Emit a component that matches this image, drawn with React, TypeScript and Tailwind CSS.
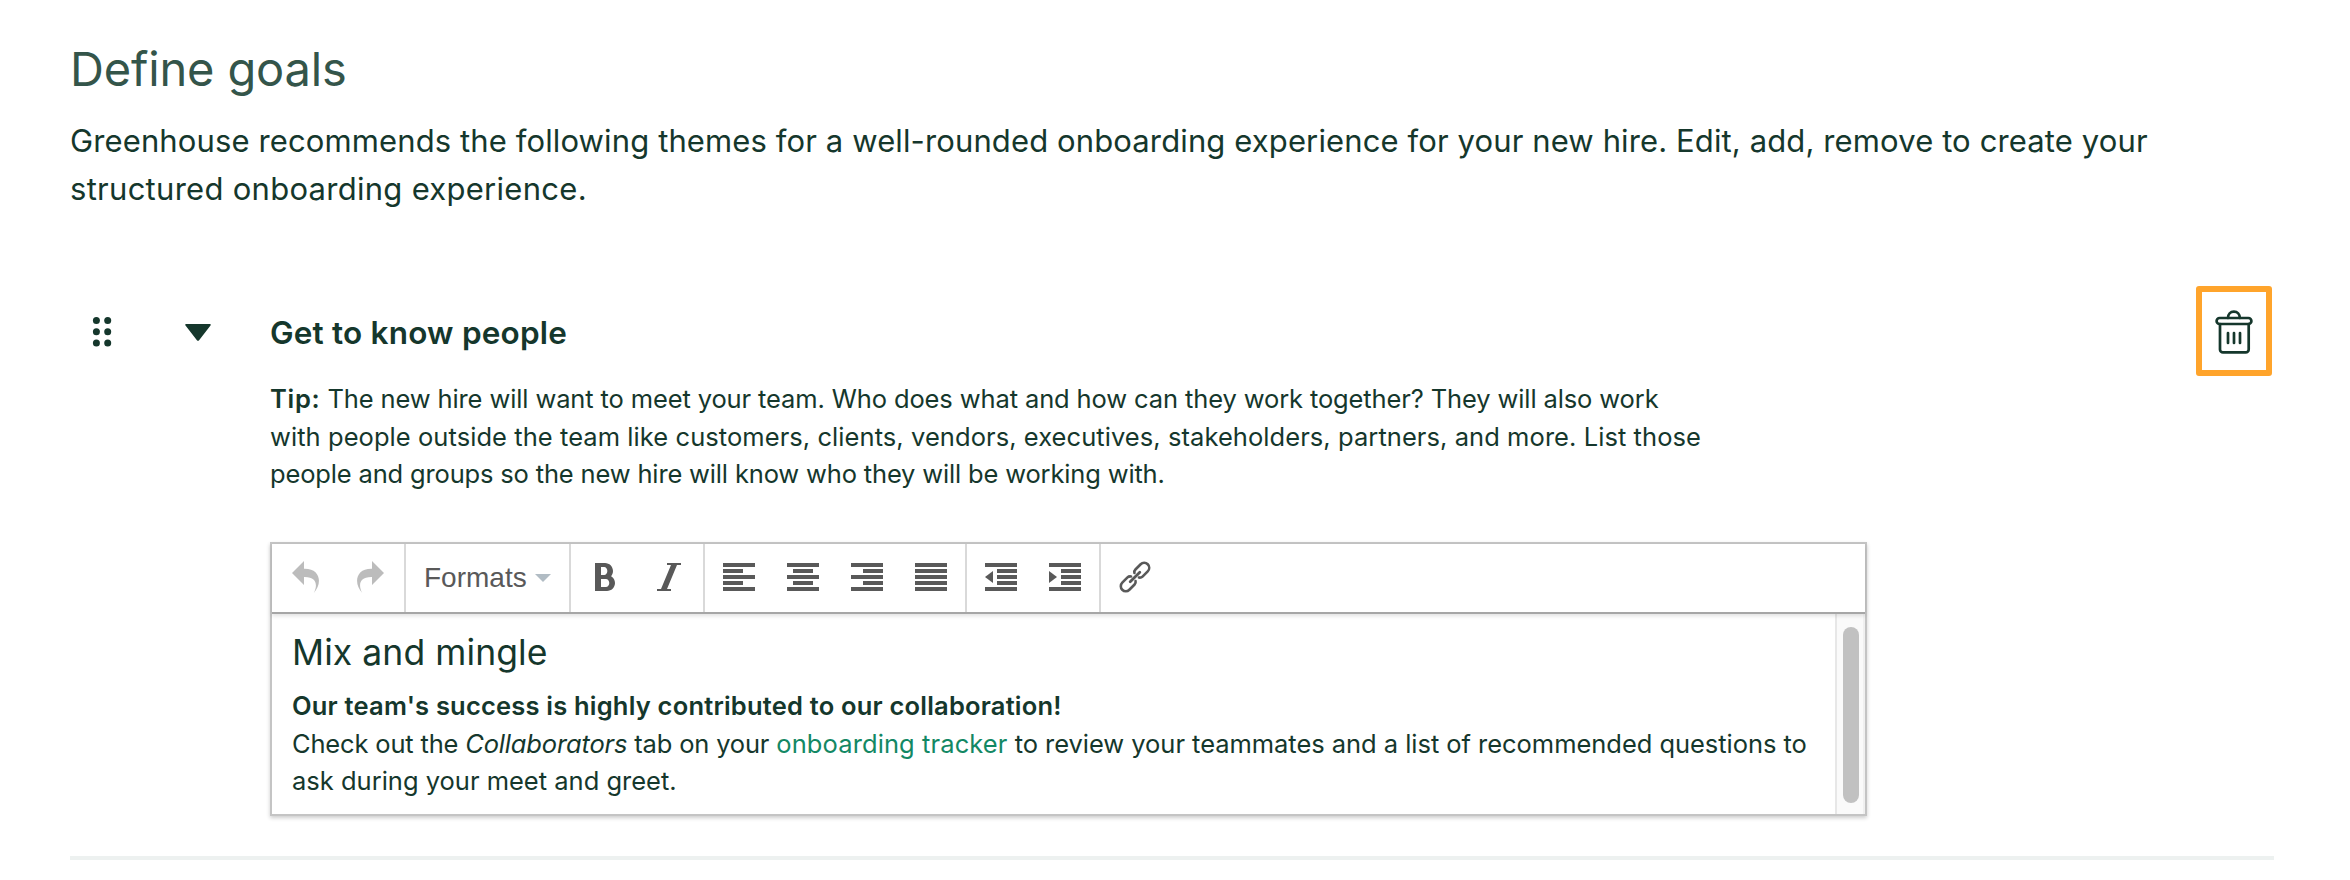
import type React from "react"
import { ImBold, ImItalic } from "react-icons/im"

interface BarIconProps {
  bars: [number, number][]
  arrow?: string
}

// five stacked bars on a 16 unit grid, each given as [x, width]
function BarIcon({ bars, arrow }: BarIconProps) {
  return (
    <svg viewBox="0 0 16 16" className="h-8 w-8" fill="currentColor" shapeRendering="crispEdges">
      {bars.map(([x, width], index) => (
        <rect key={index} x={x} y={1 + index * 3} width={width} height={2} />
      ))}
      {arrow && <path d={arrow} shapeRendering="auto" />}
    </svg>
  )
}

function UndoIcon() {
  return (
    <svg viewBox="0 0 1024 1024" className="h-8 w-8 text-[#bcbcbc]" fill="currentColor">
      <path d="M761 1024c113-206 132-520-313-509v253l-384-384 384-384v248c534-13 594 472 313 775z" />
    </svg>
  )
}

function RedoIcon() {
  return (
    <svg viewBox="0 0 1024 1024" className="h-8 w-8 text-[#bcbcbc]" fill="currentColor">
      <path d="M576 248v-248l384 384-384 384v-253c-446-10-427 303-313 509-280-303-221-789 313-775z" />
    </svg>
  )
}

function LinkIcon() {
  return (
    <svg viewBox="0 0 32 32" className="h-8 w-8" fill="none" stroke="currentColor" strokeWidth="2.6" strokeLinecap="round">
      <g transform="rotate(-45 16 16)">
        <path d="M18.4 12.8C19.1 11.7 20.2 11 21.6 11H29a5 5 0 0 1 0 10h-7.4c-1.4 0-2.5-.7-3.2-1.8" />
        <path d="M13.6 12.8C12.9 11.7 11.8 11 10.4 11H3a5 5 0 0 0 0 10h7.4c1.4 0 2.5-.7 3.2-1.8" />
        <path d="M9.2 16H22.8" strokeWidth="2.8" />
      </g>
    </svg>
  )
}

function TrashIcon() {
  return (
    <svg viewBox="0 0 38 44" className="h-11 w-[38px]" fill="none" stroke="currentColor" strokeWidth="2.7" strokeLinecap="round">
      <path d="M13 8C13 4 15.4 1.7 18.9 1.7S24.8 4 24.8 8" />
      <rect x="1.6" y="8" width="34.8" height="6" rx="3" />
      <path d="M5 14v25.4a3 3 0 0 0 3 3h22.7a3 3 0 0 0 3-3V14" />
      <path d="M13 23v10M19 23v10M25 23v10" />
    </svg>
  )
}

function DragHandle() {
  return (
    <svg viewBox="0 0 20 32" className="h-8 w-5" fill="currentColor">
      {[4.4, 15.7].map((cx) =>
        [4.4, 15.7, 26.9].map((cy) => <circle key={`${cx}-${cy}`} cx={cx} cy={cy} r={3.5} />)
      )}
    </svg>
  )
}

function ToolbarGroup({ children }: { children: React.ReactNode }) {
  return <div className="flex items-center gap-8 border-r-2 border-[#d9d9d9] px-[18px] pb-0.5">{children}</div>
}

function Toolbar() {
  return (
    <div className="relative flex h-[70px] border-b-2 border-[#a6a6a6] bg-white text-[#595959] shadow-[0_2px_4px_rgba(0,0,0,0.12)]">
      <ToolbarGroup>
        <UndoIcon />
        <RedoIcon />
      </ToolbarGroup>
      <div className="flex w-[165px] items-center justify-between border-r-2 border-[#d9d9d9] px-[18px]">
        <span className="font-['Liberation_Sans',sans-serif] text-[28px] leading-8">Formats</span>
        <svg viewBox="0 0 16 8" className="h-2 w-4 text-[#b1bcc4]" fill="currentColor">
          <path d="M0 0h16L8 8z" />
        </svg>
      </div>
      <ToolbarGroup>
        <ImBold className="h-8 w-8" />
        <ImItalic className="h-8 w-8" />
      </ToolbarGroup>
      <ToolbarGroup>
        <BarIcon bars={[[0, 16], [0, 10], [0, 16], [0, 10], [0, 16]]} />
        <BarIcon bars={[[0, 16], [3, 10], [0, 16], [3, 10], [0, 16]]} />
        <BarIcon bars={[[0, 16], [6, 10], [0, 16], [6, 10], [0, 16]]} />
        <BarIcon bars={[[0, 16], [0, 16], [0, 16], [0, 16], [0, 16]]} />
      </ToolbarGroup>
      <ToolbarGroup>
        <BarIcon bars={[[0, 16], [6, 10], [6, 10], [6, 10], [0, 16]]} arrow="M4 5v6L0 8z" />
        <BarIcon bars={[[0, 16], [6, 10], [6, 10], [6, 10], [0, 16]]} arrow="M0 5v6l4-3z" />
      </ToolbarGroup>
      <div className="flex items-center px-[18px] pb-0.5">
        <LinkIcon />
      </div>
    </div>
  )
}

function Editor() {
  return (
    <div className="mt-[49.5px] h-[274px] w-[1597px] border-2 border-[#c4c4c4] shadow-[0_2px_4px_rgba(0,0,0,0.2)]">
      <Toolbar />
      <div className="flex h-[200px]">
        <div className="flex-1 pt-[14.5px] pl-5 text-[25.5px] leading-[37.5px] whitespace-nowrap">
          <h3 className="text-[35.5px] leading-[48px] tracking-[0.08px]">Mix and mingle</h3>
          <p className="mt-2.5 font-semibold tracking-[0.2px]">Our team's success is highly contributed to our collaboration!</p>
          <p className="pt-[0.5px] tracking-[-0.04px]">
            <span className="tracking-[-0.17px]">
              Check out the <em>Collaborators</em> tab on your{" "}
            </span>
            <a className="tracking-[0.1px] text-[#138864]">onboarding tracker</a> to review your teammates and a list of
            recommended questions to
          </p>
          <p>ask during your meet and greet.</p>
        </div>
        <div className="w-[30px] border-r-2 border-l-2 border-r-[#f0f0f0] border-l-[#e7e7e7] bg-[#fafafa] pt-[13px] pl-1.5">
          <div className="h-44 w-4 rounded-full bg-[#c1c1c1]" />
        </div>
      </div>
    </div>
  )
}

export default function App() {
  return (
    <div className="h-[880px] w-[2350px] overflow-hidden bg-white pt-[39px] pl-[70px] font-['Inter',sans-serif] text-[#15372c]">
      {/* Header */}
      <h1 className="text-[47px] leading-[60px] tracking-[-0.15px] text-[#34554a]">Define goals</h1>
      <div className="mt-[18px] text-[31px] leading-[48px] whitespace-nowrap">
        <p className="tracking-[0.12px]">
          Greenhouse recommends the following themes for a well-rounded onboarding experience for your new hire. Edit, add,
          remove to create your
        </p>
        <p className="tracking-[0.28px]">structured onboarding experience.</p>
      </div>

      {/* Goal */}
      <div className="mt-[73px] flex h-[574px] w-[2204px] items-start border-b-4 border-[#edf1f0]">
        <div className="pt-[30px] pl-[22px]">
          <DragHandle />
        </div>
        <svg viewBox="0 0 26 17" className="mt-[38px] ml-[73px] h-[17px] w-[26px]" fill="currentColor">
          <path d="M1 0h24c.8 0 1 .8.5 1.4L13.9 16.4c-.5.6-1.3.6-1.8 0L.5 1.4C0 .8.2 0 1 0z" />
        </svg>
        <div className="ml-[59px] pt-[23px]">
          <h2 className="text-[31.5px] leading-[48px] font-semibold tracking-[0.2px]">Get to know people</h2>
          <div className="mt-[23px] text-[25.5px] leading-[37.5px] whitespace-nowrap">
            <p className="tracking-[-0.12px]">
              <strong className="font-semibold tracking-[0.7px]">Tip:</strong> The new hire will want to meet your team. Who does
              what and how can they work together? They will also work
            </p>
            <p className="tracking-[0.065px]">
              with people outside the team like customers, clients, vendors, executives, stakeholders, partners, and more. List
              those
            </p>
            <p className="tracking-[-0.16px]">people and groups so the new hire will know who they will be working with.</p>
          </div>
          <Editor />
        </div>
        <button className="mr-0.5 ml-auto flex h-[90px] w-[76px] items-center justify-center rounded-[3px] border-6 border-[#ffa42b] pt-0.5">
          <TrashIcon />
        </button>
      </div>
    </div>
  )
}
